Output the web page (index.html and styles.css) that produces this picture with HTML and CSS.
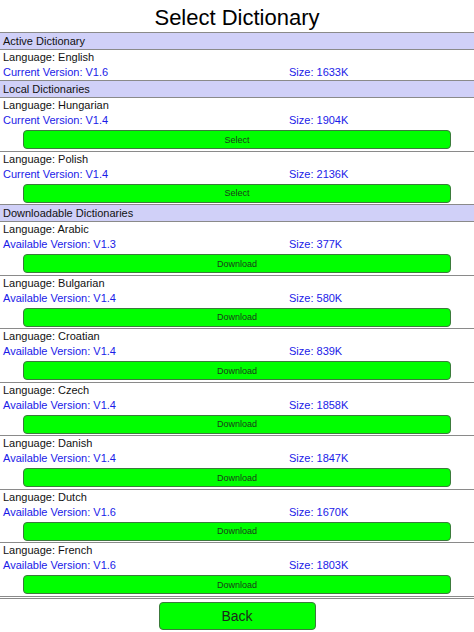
FILE: index.html
```html
<!DOCTYPE html>
<html>
<head>
<meta charset="utf-8">
<link rel="stylesheet" href="styles.css">
</head>
<body>
<div class="page">
  <h1 class="title">Select Dictionary</h1>
  <div class="list">
    <div class="section">Active Dictionary</div>
    <div class="item">
      <div class="lang">Language: English</div>
      <div class="meta"><span>Current Version: V1.6</span><span>Size: 1633K</span></div>
    </div>
    <div class="section">Local Dictionaries</div>
    <div class="item">
      <div class="lang">Language: Hungarian</div>
      <div class="meta"><span>Current Version: V1.4</span><span>Size: 1904K</span></div>
      <button class="btn">Select</button>
    </div>
    <div class="item">
      <div class="lang">Language: Polish</div>
      <div class="meta"><span>Current Version: V1.4</span><span>Size: 2136K</span></div>
      <button class="btn">Select</button>
    </div>
    <div class="section">Downloadable Dictionaries</div>
    <div class="item">
      <div class="lang">Language: Arabic</div>
      <div class="meta"><span>Available Version: V1.3</span><span>Size: 377K</span></div>
      <button class="btn">Download</button>
    </div>
    <div class="item">
      <div class="lang">Language: Bulgarian</div>
      <div class="meta"><span>Available Version: V1.4</span><span>Size: 580K</span></div>
      <button class="btn">Download</button>
    </div>
    <div class="item">
      <div class="lang">Language: Croatian</div>
      <div class="meta"><span>Available Version: V1.4</span><span>Size: 839K</span></div>
      <button class="btn">Download</button>
    </div>
    <div class="item">
      <div class="lang">Language: Czech</div>
      <div class="meta"><span>Available Version: V1.4</span><span>Size: 1858K</span></div>
      <button class="btn">Download</button>
    </div>
    <div class="item">
      <div class="lang">Language: Danish</div>
      <div class="meta"><span>Available Version: V1.4</span><span>Size: 1847K</span></div>
      <button class="btn">Download</button>
    </div>
    <div class="item">
      <div class="lang">Language: Dutch</div>
      <div class="meta"><span>Available Version: V1.6</span><span>Size: 1670K</span></div>
      <button class="btn">Download</button>
    </div>
    <div class="item">
      <div class="lang">Language: French</div>
      <div class="meta"><span>Available Version: V1.6</span><span>Size: 1803K</span></div>
      <button class="btn">Download</button>
    </div>
  </div>
  <div class="footer">
    <button class="back">Back</button>
  </div>
</div>
</body>
</html>
```

FILE: styles.css
```css
html, body {
  margin: 0;
  padding: 0;
  background: #ffffff;
}

body {
  font-family: "Liberation Sans", Arial, Helvetica, sans-serif;
  font-size: 11px;
  color: #111111;
  width: 474px;
  height: 632px;
  overflow: hidden;
}

.page {
  display: flex;
  flex-direction: column;
}

.title {
  margin: 0;
  height: 32px;
  line-height: 35px;
  font-size: 22px;
  font-weight: normal;
  text-align: center;
  color: #000000;
  border-bottom: 1px solid #8a8a8a;
}

.list {
  display: flex;
  flex-direction: column;
  padding-bottom: 1px;
  border-bottom: 1px solid #8a8a8a;
}

.section {
  height: 16px;
  line-height: 16px;
  padding-left: 3px;
  background: #d0d0f8;
  border-bottom: 1px solid #8a8a8a;
  color: #111111;
}

.item {
  display: flex;
  flex-direction: column;
  border-bottom: 1px solid #8a8a8a;
}

.lang {
  height: 15px;
  line-height: 15px;
  padding-left: 3px;
}

.meta {
  display: grid;
  grid-template-columns: 286px 1fr;
  height: 15px;
  line-height: 15px;
  padding-left: 3px;
  color: #1a1ae8;
}

.btn {
  margin: 2px 23px 1.5px 23px;
  height: 19px;
  padding: 0;
  background: #00ff00;
  border: 1px solid #3c7a3c;
  border-radius: 4px;
  font-family: "Liberation Sans", Arial, Helvetica, sans-serif;
  font-size: 9px;
  color: #1b3a1b;
  text-align: center;
}

.footer {
  display: flex;
  justify-content: center;
  padding-top: 3px;
}

.back {
  width: 157px;
  height: 28px;
  padding: 0;
  background: #00ff00;
  border: 1px solid #3c7a3c;
  border-radius: 4px;
  font-family: "Liberation Sans", Arial, Helvetica, sans-serif;
  font-size: 14px;
  color: #1b2a1b;
}
```
